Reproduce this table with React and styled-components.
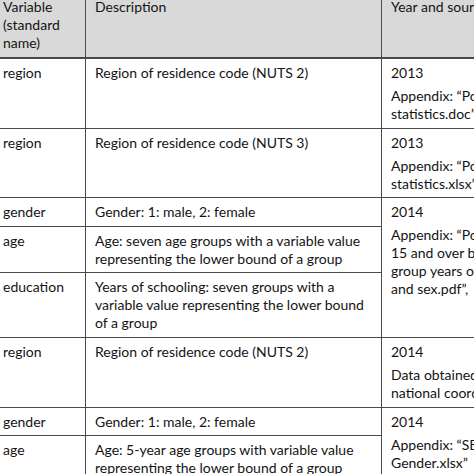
import React from "react";
import styled, { createGlobalStyle } from "styled-components";

const Global = createGlobalStyle`
  html, body { margin: 0; padding: 0; background: #fff; overflow: hidden; }
  body { width: 474px; height: 474px; }
`;

const Table = styled.table`
  border-collapse: collapse;
  table-layout: fixed;
  width: 700px;
  margin: -9px 0 0 -7px;
  font-family: Lato, "Liberation Sans", sans-serif;
  font-size: 14px;
  line-height: 18px;
  color: #141414;
`;

const Th = styled.th`
  background: #d9d9d9;
  font-weight: 400;
  text-align: left;
  vertical-align: top;
  padding: 6px 8px 5px 9px;
  border: 1px solid #4a4a4a;
  border-bottom: 2px solid #4a4a4a;
`;

const Td = styled.td`
  vertical-align: top;
  padding: 5px 8px 4.6px 9px;
  border: 1px solid #4a4a4a;
`;

const Para = styled.div`
  white-space: nowrap;
  & + & { margin-top: 5px; }
`;

const rows = [
  { v: "region", d: "Region of residence code (NUTS 2)", s: { span: 1, year: "2013", lines: ["Appendix: \u201CPopulation", "statistics.doc\u201D"] } },
  { v: "region", d: "Region of residence code (NUTS 3)", s: { span: 1, year: "2013", lines: ["Appendix: \u201CPopulation", "statistics.xlsx\u201D"] } },
  { v: "gender", d: "Gender: 1: male, 2: female", s: { span: 3, year: "2014", lines: ["Appendix: \u201CPopulation aged", "15 and over by age", "group years of schooling", "and sex.pdf\u201D,"] } },
  { v: "age", d: "Age: seven age groups with a variable value representing the lower bound of a group" },
  { v: "education", d: "Years of schooling: seven groups with a variable value representing the lower bound of a group" },
  { v: "region", d: "Region of residence code (NUTS 2)", s: { span: 1, year: "2014", lines: ["Data obtained from the", "national coordinator"] } },
  { v: "gender", d: "Gender: 1: male, 2: female", s: { span: 2, year: "2014", lines: ["Appendix: \u201CSEX", "Gender.xlsx\u201D"] } },
  { v: "age", d: "Age: 5-year age groups with variable value representing the lower bound of a group" },
];

export default function App() {
  return (
    <>
      <Global />
      <Table>
        <colgroup>
          <col style={{ width: 92 }} />
          <col style={{ width: 296 }} />
          <col />
        </colgroup>
        <thead>
          <tr>
            <Th>Variable (standard name)</Th>
            <Th>Description</Th>
            <Th>Year and source</Th>
          </tr>
        </thead>
        <tbody>
          {rows.map((r, i) => (
            <tr key={i}>
              <Td>{r.v}</Td>
              <Td>{r.d}</Td>
              {r.s && (
                <Td rowSpan={r.s.span}>
                  <Para>{r.s.year}</Para>
                  <Para>
                    {r.s.lines.map((l, j) => (
                      <React.Fragment key={j}>
                        {j > 0 && <br />}
                        {l}
                      </React.Fragment>
                    ))}
                  </Para>
                </Td>
              )}
            </tr>
          ))}
        </tbody>
      </Table>
    </>
  );
}
